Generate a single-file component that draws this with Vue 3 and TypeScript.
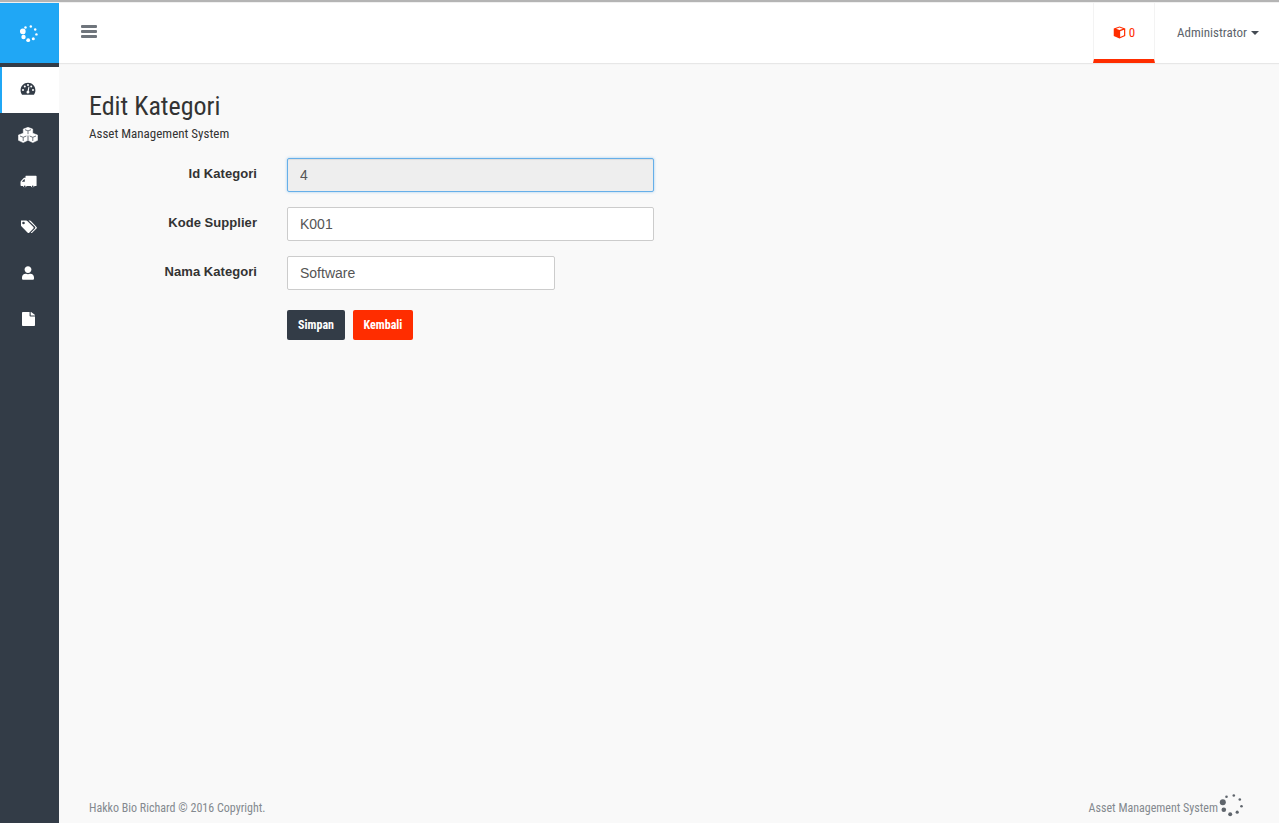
<script setup lang="ts">
const dots = [
  { x: -9.2, y: -2.8, r: 3 }, { x: -8.2, y: 4.8, r: 2.3 }, { x: -1.8, y: 9.2, r: 2 }, { x: 5.2, y: 7.2, r: 1.6 },
  { x: 9.5, y: 1.2, r: 1.3 }, { x: 7.8, y: -5.5, r: 1.3 }, { x: 1.8, y: -9.5, r: 1.3 }, { x: -5.5, y: -8.2, r: 1.3 }
]
</script>

<template>
  <div class="page">
    <div class="topline"></div>
    <div class="shell">
      <aside class="sidebar">
        <div class="logo">
          <svg class="spin-logo" viewBox="-13 -13 26 26" fill="#fff"><circle v-for="(d, i) in dots" :key="i" :cx="d.x" :cy="d.y" :r="d.r * 1.3" /></svg>
        </div>
        <nav class="nav">
          <a class="nav-item active">
            <svg width="16" height="16" viewBox="0 0 16 16"><path fill="#333c47" fill-rule="evenodd" d="M8 1.800C3.800 1.800.6 5 .6 9.200c0 1.600.5 3 1.300 4.200.2.200.4.300.7.300h10.800c.3 0 .5-.1.700-.3.800-1.200 1.300-2.600 1.300-4.200 0-4.200-3.200-7.400-7.400-7.400zM3 10a1 1 0 1 1 0-2 1 1 0 0 1 0 2zm1.800-3.600a1 1 0 1 1 0-2 1 1 0 0 1 0 2zM8 5a1 1 0 1 1 0-2 1 1 0 0 1 0 2zm1.300 6.800a1.500 1.500 0 0 1-2.800-.6c0-.7.500-1.300 1.100-1.400l.9-4.100h.9l-.6 4.300c.6.400.8 1.200.5 1.800zM11.200 6.400a1 1 0 1 1 0-2 1 1 0 0 1 0 2zM13 10a1 1 0 1 1 0-2 1 1 0 0 1 0 2z"/></svg>
          </a>
          <a class="nav-item">
            <svg width="20" height="16" viewBox="0 0 20 16"><g fill="#fff" stroke="#fff" stroke-width=".5" stroke-linejoin="round"><path d="M10 .3l4.700 1.800v4.700L10 8.800 5.300 6.800V2.100z"/><path d="M5.200 6.200l4.700 1.900v5.200L5.200 15.600.4 13.300V8.100z"/><path d="M14.800 6.200l4.800 1.900v5.200l-4.800 2.300-4.700-2.300V8.100z"/></g><g fill="none" stroke="#333c47" stroke-width=".7"><path d="M7 2.700l3 1.200 3-1.200M10 4.200v3M2 9l3.200 1.300L8.400 9M5.200 10.400v3.600M11.600 9l3.200 1.300L18 9M14.800 10.400v3.600M10 8.500v5"/></g></svg>
          </a>
          <a class="nav-item">
            <svg width="17" height="17" viewBox="0 0 16 16"><path fill="#fff" fill-rule="evenodd" d="M5.500 2.500H15c.4 0 .6.200.6.600v8.700c0 .3-.2.500-.6.500h-1.300a1.800 1.800 0 0 1-3.500 0H6.300a1.800 1.800 0 0 1-3.500 0H1.200c-.4 0-.7-.3-.7-.7V8.500c0-.4.200-.8.400-1l2.600-2.700c.3-.3.600-.4 1-.4h.7V3.100c0-.4.100-.6.300-.6zM4.500 5.800H3.900L2 7.700v.6h2.500zM4.500 13.400a.8.800 0 1 0 0-1.600.8.800 0 0 0 0 1.600zm7.500 0a.8.800 0 1 0 0-1.600.8.800 0 0 0 0 1.600z"/></svg>
          </a>
          <a class="nav-item">
            <svg width="17" height="16" viewBox="0 0 17 16"><path fill="#fff" fill-rule="evenodd" d="M1 1.500h5.200c.4 0 .8.200 1.100.5l6.100 6c.4.400.4 1.100 0 1.500l-4.200 4.200c-.4.400-1.100.4-1.500 0L1.600 7.600C1.200 7.300 1 6.900 1 6.500zM3.500 5.300a1.300 1.300 0 1 0 0-2.600 1.300 1.300 0 0 0 0 2.600z"/><path fill="#fff" d="M8.500 1.500h1.300c.4 0 .8.200 1.100.5l5.600 5.900c.5.500.5 1.200 0 1.700l-4.300 4.100c-.4.400-1 .4-1.400.1l4.200-4.300c.5-.6.500-1.200 0-1.800z"/></svg>
          </a>
          <a class="nav-item">
            <svg width="12" height="14" viewBox="0 0 448 512"><path fill="#fff" d="M224 256c70.700 0 128-57.300 128-128S294.700 0 224 0 96 57.300 96 128s57.300 128 128 128zm89.600 32h-16.700c-22.200 10.200-46.900 16-72.900 16s-50.600-5.800-72.900-16h-16.700C60.200 288 0 348.200 0 422.400V464c0 26.500 21.500 48 48 48h352c26.500 0 48-21.500 48-48v-41.600c0-74.200-60.200-134.400-134.400-134.400z"/></svg>
          </a>
          <a class="nav-item">
            <svg width="13" height="14" viewBox="0 0 384 512" preserveAspectRatio="none"><path fill="#fff" d="M224 136V0H24C10.700 0 0 10.700 0 24v464c0 13.300 10.700 24 24 24h336c13.300 0 24-10.700 24-24V160H248c-13.200 0-24-10.800-24-24zm160-14.100v6.100H256V0h6.100c6.400 0 12.500 2.500 17 7l97.900 98c4.500 4.500 7 10.600 7 16.900z"/></svg>
          </a>
        </nav>
      </aside>

      <div class="main">
        <header class="topbar">
          <button class="burger" type="button" aria-label="Menu"><span></span><span></span><span></span></button>
          <div class="top-right">
            <a class="cart">
              <svg width="13" height="13" viewBox="0 0 14 14"><path fill="#ff2d00" fill-rule="evenodd" d="M7 .5l6.200 2.300v8L7 13.500.8 10.800v-8zM7 1.700L3.300 3 7 4.400 10.700 3zM7.700 5.600v6.200l4.200-1.800V4z"/></svg>
              <span>0</span>
            </a>
            <a class="user">Administrator<i class="caret"></i></a>
          </div>
        </header>

        <main class="content">
          <h1>Edit Kategori</h1>
          <p class="sub">Asset Management System</p>
          <form class="form" @submit.prevent>
            <div class="row">
              <label>Id Kategori</label>
              <input class="wide focused" value="4" disabled />
            </div>
            <div class="row">
              <label>Kode Supplier</label>
              <input class="wide" value="K001" />
            </div>
            <div class="row">
              <label>Nama Kategori</label>
              <input class="narrow" value="Software" />
            </div>
            <div class="row actions">
              <label></label>
              <button class="btn dark" type="submit">Simpan</button>
              <button class="btn red" type="button">Kembali</button>
            </div>
          </form>
        </main>

        <footer class="footer">
          <span>Hakko Bio Richard © 2016 Copyright.</span>
          <span class="foot-right">Asset Management System
            <svg class="spin-foot" viewBox="-13 -13 26 26" fill="#5f656c"><circle v-for="(d, i) in dots" :key="i" :cx="d.x" :cy="d.y" :r="d.r" /></svg>
          </span>
        </footer>
      </div>
    </div>
  </div>
</template>

<style>
html, body { margin: 0; padding: 0; }
</style>

<style scoped>
.page { height: 100vh; display: flex; flex-direction: column; overflow: hidden; background: #f9f9f9; font-family: Roboto, "Liberation Sans", sans-serif; font-stretch: 75%; }
.topline { height: 3px; flex: none; background: linear-gradient(#b4b4b4 0, #b4b4b4 2px, #f0f0f0 2px); }
.shell { flex: 1; display: flex; min-height: 0; }
.sidebar { width: 59px; flex: none; background: #333c47; }
.logo { height: 60px; background: #20a7f5; display: flex; align-items: center; justify-content: center; }
.spin-logo { width: 19px; height: 19px; }
.nav { padding-top: 4px; }
.nav-item { height: 46px; padding: 0 3px 2px 0; box-sizing: border-box; display: flex; align-items: center; justify-content: center; }
.nav-item.active { background: #fff; border-left: 2px solid #20a7f5; padding-right: 5px; }
.main { flex: 1; display: flex; flex-direction: column; min-width: 0; }
.topbar { height: 60px; flex: none; box-sizing: border-box; background: #fff; box-shadow: 0 1px 1px rgba(0,0,0,.07); display: flex; justify-content: space-between; }
.burger { width: 60px; padding: 0 1px 3px 0; border: 0; background: none; display: flex; flex-direction: column; justify-content: center; align-items: center; gap: 2px; }
.burger span { width: 16px; height: 3px; background: #6f757c; border-radius: 1px; }
.top-right { display: flex; }
.cart { width: 62px; box-sizing: border-box; border-left: 1px solid #f3f3f3; border-right: 1px solid #f3f3f3; border-bottom: 4px solid #ff2d00; display: flex; align-items: center; justify-content: center; gap: 3px; color: #ff2d00; font-size: 13px; padding-top: 3px; }
.user { width: 124px; box-sizing: border-box; padding: 0 0 1px 22px; display: flex; align-items: center; color: #5d646c; font-size: 13px; }
.caret { margin-left: 4px; margin-top: 1px; border-top: 4px solid #444b53; border-left: 4px solid transparent; border-right: 4px solid transparent; }
.content { flex: 1; padding: 0 30px; color: #333; }
h1 { margin: 0; padding-top: 28px; font-size: 26px; line-height: 30px; font-weight: 400; color: #333; }
.sub { margin: 5px 0 0; font-size: 13px; line-height: 16px; color: #333; }
.form { margin-top: 16px; }
.row { display: flex; align-items: flex-start; margin-bottom: 15px; }
.row label { width: 168px; flex: none; margin-right: 30px; text-align: right; font: 700 13px/16px "Liberation Sans", Arial, sans-serif; color: #333; padding-top: 8px; letter-spacing: .05px; box-sizing: border-box; }
input { height: 34px; box-sizing: border-box; padding: 0 12px; border: 1px solid #ccc; border-radius: 2px; background: #fff; color: #555; font: 14px "Liberation Sans", Arial, sans-serif; outline: none; }
.wide { width: 367px; }
.narrow { width: 268px; }
.focused { background: #eee; border-color: #66afe9; box-shadow: inset 0 1px 1px rgba(0,0,0,.075), 0 0 3px rgba(102,175,233,.6); opacity: 1; -webkit-text-fill-color: #555; }
.actions { margin-top: 20px; margin-bottom: 0; }
.actions label { padding: 0; }
.btn { height: 30px; box-sizing: border-box; padding: 0; border: 0; border-radius: 2px; color: #fff; font: 700 12px Roboto, sans-serif; font-stretch: 75%; }
.dark { width: 58px; background: #333c47; margin-right: 8px; }
.red { width: 60px; background: #ff2d00; }
.footer { height: 37px; flex: none; box-sizing: border-box; padding: 14px 34px 0 30px; display: flex; justify-content: space-between; align-items: flex-start; color: #84898f; font-size: 12px; line-height: 16px; }
.foot-right { position: relative; padding-right: 27px; }
.spin-foot { position: absolute; right: 0; top: -8px; width: 26px; height: 26px; }
</style>
